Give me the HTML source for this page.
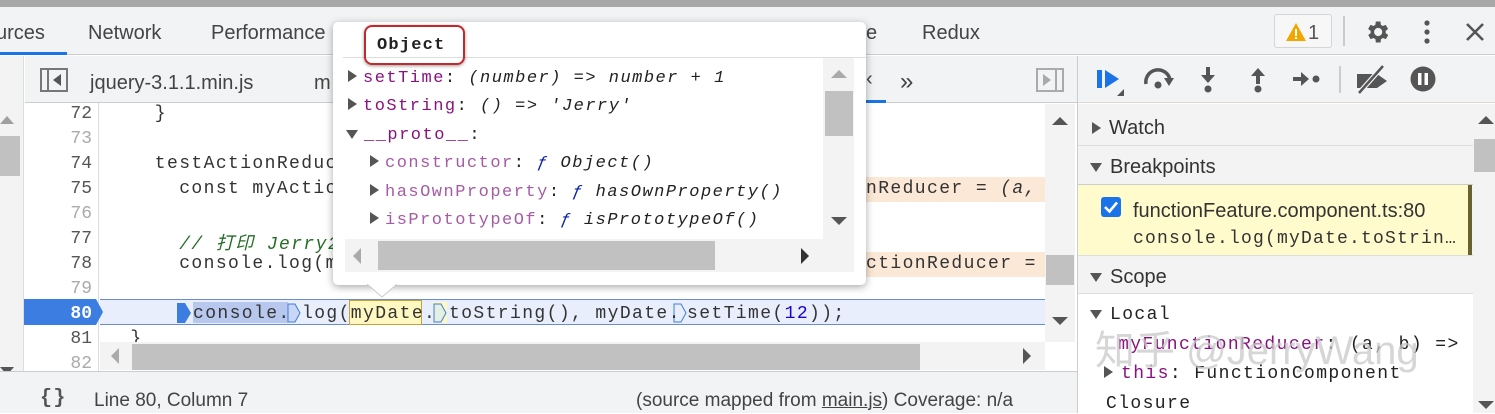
<!DOCTYPE html>
<html><head><meta charset="utf-8"><style>
*{margin:0;padding:0;box-sizing:border-box}
body{width:1495px;height:413px;overflow:hidden;background:#fff;position:relative;font-family:"Liberation Sans","Noto Sans CJK SC",sans-serif;color:#333}
.a{position:absolute}
.m{font-family:"Liberation Mono","Noto Sans CJK SC",monospace;font-size:18px;letter-spacing:1.4px;white-space:pre;margin-top:2px}
.pp{margin-top:3px}
.ui{font-size:20px;color:#444;white-space:nowrap;margin-top:2px}
.ln{position:absolute;left:24px;width:68px;text-align:right;font-family:"Liberation Mono",monospace;font-size:18px;color:#555;margin-top:2px}
.cl{position:absolute;left:106px}
.tri{display:inline-block;width:0;height:0;border-left:9px solid #555;border-top:6px solid transparent;border-bottom:6px solid transparent;margin-right:8px}
.trd{display:inline-block;width:0;height:0;border-top:9px solid #555;border-left:6px solid transparent;border-right:6px solid transparent;margin-right:8px;vertical-align:middle}
.p{color:#881280}.pl{color:#a65ba4}.i{font-style:italic}
</style></head><body>
<div class="a" style="left:0;top:0;width:1495px;height:7px;background:#a8a8a8"></div>
<div class="a" style="left:0;top:7px;width:1495px;height:48px;background:#f1f3f4;border-bottom:1px solid #cbcdd1"></div>
<div class="a ui" style="left:-4px;top:20px">urces</div>
<div class="a" style="left:0;top:52px;width:67px;height:3px;background:#1a73e8"></div>
<div class="a ui" style="left:88px;top:20px">Network</div>
<div class="a ui" style="left:211px;top:20px">Performance</div>
<div class="a ui" style="left:866px;top:20px">e</div>
<div class="a ui" style="left:922px;top:20px">Redux</div>
<div class="a" style="left:1274px;top:14px;width:58px;height:34px;border:1px solid #d5d5d5;border-radius:3px;background:#f7f7f7"></div>
<svg class="a" style="left:1285px;top:22px" width="22" height="20"><path d="M11 1 L21 19 L1 19Z" fill="#f2a600"/><rect x="10" y="7" width="2" height="7" fill="#fff"/><rect x="10" y="15" width="2" height="2" fill="#fff"/></svg>
<div class="a ui" style="left:1308px;top:20px;color:#555">1</div>
<div class="a" style="left:1343px;top:16px;width:2px;height:30px;background:#ccc"></div>
<svg class="a" style="left:1363px;top:18px" width="28" height="28" viewBox="0 0 24 24"><path fill="#555" d="M19.4 13a7.5 7.5 0 000-2l2.1-1.6-2-3.5-2.5 1a7 7 0 00-1.700-1L15 3h-4l-.4 2.9a7 7 0 00-1.7 1l-2.5-1-2 3.5L6.6 11a7.5 7.5 0 000 2l-2.1 1.6 2 3.5 2.5-1a7 7 0 001.7 1L11 21h4l.4-2.9a7 7 0 001.7-1l2.5 1 2-3.5zM13 15.5A3.5 3.5 0 1113 8.5a3.5 3.5 0 010 7z"/></svg>
<svg class="a" style="left:1420px;top:18px" width="14" height="28"><circle cx="7" cy="5" r="2.6" fill="#555"/><circle cx="7" cy="14" r="2.6" fill="#555"/><circle cx="7" cy="23" r="2.6" fill="#555"/></svg>
<svg class="a" style="left:1465px;top:22px" width="20" height="20"><path d="M2 2L18 18M18 2L2 18" stroke="#555" stroke-width="2.6"/></svg>

<div class="a" style="left:0;top:56px;width:24px;height:316px;background:#f3f3f3;border-right:1px solid #ddd"></div>
<div class="a" style="left:0;top:136px;width:20px;height:40px;background:#c1c1c1"></div>
<svg class="a" style="left:0;top:115px" width="14" height="10"><path d="M0 9L7 1L14 9Z" fill="#a0a0a0"/></svg>
<svg class="a" style="left:0;top:366px" width="14" height="10"><path d="M0 1L7 9L14 1Z" fill="#555"/></svg>

<div class="a" style="left:25px;top:56px;width:1052px;height:47px;background:#f1f3f4;border-bottom:1px solid #cbcdd1"></div>
<svg class="a" style="left:40px;top:68px" width="28" height="24"><rect x="1" y="1" width="26" height="22" fill="none" stroke="#777" stroke-width="2"/><rect x="7" y="1" width="2" height="22" fill="#777"/><path d="M21 6L13 12L21 18Z" fill="#555"/></svg>
<div class="a ui" style="left:90px;top:70px">jquery-3.1.1.min.js</div>
<div class="a ui" style="left:314px;top:70px">m</div>
<div class="a ui" style="left:866px;top:66px">‹</div>
<div class="a ui" style="left:900px;top:66px;font-size:24px">»</div>
<div class="a" style="left:866px;top:100px;width:20px;height:3px;background:#1a73e8"></div>
<svg class="a" style="left:1036px;top:68px" width="28" height="24"><rect x="1" y="1" width="26" height="22" fill="none" stroke="#aaa" stroke-width="2"/><rect x="19" y="1" width="2" height="22" fill="#aaa"/><path d="M7 6L15 12L7 18Z" fill="#aaa"/></svg>

<div class="a" style="left:98px;top:103px;width:1px;height:268px;background:#ddd"></div>
<div class="ln" style="top:102px">72</div>
<div class="ln" style="top:127px;color:#aaa">73</div>
<div class="ln" style="top:152px">74</div>
<div class="ln" style="top:177px">75</div>
<div class="ln" style="top:202px;color:#aaa">76</div>
<div class="ln" style="top:227px">77</div>
<div class="ln" style="top:252px">78</div>
<div class="ln" style="top:277px;color:#aaa">79</div>
<div class="a" style="left:100px;top:299px;width:945px;height:26px;background:#e9eefc;border-top:1px solid #6b8bd4;border-bottom:1px solid #6b8bd4"></div>
<svg class="a" style="left:24px;top:299px" width="80" height="26"><path d="M0 0H72L79 13L72 26H0Z" fill="#3b7de0"/></svg>
<div class="ln" style="top:302px;color:#fff;font-weight:bold">80</div>
<div class="ln" style="top:327px">81</div>
<div class="ln" style="top:352px;color:#aaa">82</div>

<div class="cl m" style="top:102px">    }</div>
<div class="cl m" style="top:152px">    testActionReduce</div>
<div class="cl m" style="top:177px">      const myAction</div>
<div class="cl m" style="top:227px;color:#236e25;font-style:italic">      // 打印 Jerry2</div>
<div class="cl m" style="top:252px">      console.log(my</div>
<div class="a" style="left:866px;top:177px;width:179px;height:25px;background:#fce8d6"></div>
<div class="a" style="left:866px;top:252px;width:179px;height:25px;background:#fce8d6"></div>
<div class="a m" style="left:866px;top:177px;width:179px;height:22px;overflow:hidden">nReducer = <span class="i">(a, b</span></div>
<div class="a m" style="left:866px;top:252px;width:179px;height:22px;overflow:hidden">ctionReducer = (</div>
<div class="a" style="left:193px;top:302px;width:95px;height:21px;background:#b7c7ee"></div>
<div class="a" style="left:349px;top:300px;width:73px;height:25px;background:#fff8c0;border:1px solid #c9a13a"></div>
<div class="a" style="left:433px;top:302px;width:14px;height:21px;background:#fff8c0"></div>
<svg class="a" style="left:177px;top:303px" width="14" height="20"><path d="M0 0H8L14 10L8 20H0Z" fill="#3b7de0"/></svg>
<svg class="a" style="left:287px;top:303px" width="14" height="20"><path d="M1 1H8L13 10L8 19H1Z" fill="#c9d6f5" stroke="#3b7de0"/></svg>
<svg class="a" style="left:433px;top:303px" width="14" height="20"><path d="M1 1H8L13 10L8 19H1Z" fill="#e4f0e0" stroke="#3b7de0"/></svg>
<svg class="a" style="left:673px;top:303px" width="14" height="20"><path d="M1 1H8L13 10L8 19H1Z" fill="#e9eefc" stroke="#3b7de0"/></svg>
<div class="a m" style="left:193px;top:302px">console.</div>
<div class="a m" style="left:302px;top:302px">log(myDate.</div>
<div class="a m" style="left:449px;top:302px">toString(), myDate.</div>
<div class="a m" style="left:687px;top:302px">setTime(<span style="color:#1c00cf">12</span>));</div>
<div class="cl m" style="top:327px">  }</div>

<div class="a" style="left:1045px;top:104px;width:30px;height:238px;background:#f3f3f3"></div>
<svg class="a" style="left:1052px;top:116px" width="16" height="10"><path d="M0 9L8 1L16 9Z" fill="#555"/></svg>
<svg class="a" style="left:1052px;top:316px" width="16" height="10"><path d="M0 1L8 9L16 1Z" fill="#555"/></svg>
<div class="a" style="left:1046px;top:255px;width:28px;height:30px;background:#c1c1c1"></div>
<div class="a" style="left:100px;top:342px;width:945px;height:28px;background:#f3f3f3"></div>
<div class="a" style="left:132px;top:344px;width:788px;height:26px;background:#c1c1c1"></div>
<svg class="a" style="left:110px;top:348px" width="10" height="16"><path d="M9 0L1 8L9 16Z" fill="#aaa"/></svg>
<svg class="a" style="left:1022px;top:348px" width="10" height="16"><path d="M1 0L9 8L1 16Z" fill="#555"/></svg>

<div class="a" style="left:0;top:371px;width:1077px;height:42px;background:#f1f3f4;border-top:1px solid #cbcdd1"></div>
<div class="a m" style="left:40px;top:385px;font-weight:bold;color:#555;font-size:20px">{}</div>
<div class="a ui" style="left:94px;top:388px;font-size:19px">Line 80, Column 7</div>
<div class="a ui" style="left:636px;top:388px;font-size:19px">(source mapped from <u>main.js</u>) Coverage: n/a</div>

<div class="a" style="left:1077px;top:56px;width:1px;height:357px;background:#cbcdd1"></div>
<div class="a" style="left:1078px;top:56px;width:417px;height:47px;background:#f1f3f4;border-bottom:1px solid #e0d8d0"></div>
<svg class="a" style="left:1096px;top:67px" width="34" height="30"><rect x="1" y="3" width="5" height="18" fill="#1a73e8"/><path d="M9 3L23 12L9 21Z" fill="#1a73e8"/><path d="M28 22V29H21Z" fill="#555"/></svg>
<svg class="a" style="left:1143px;top:68px" width="32" height="22"><path d="M3 16A12 12 0 0127 12" fill="none" stroke="#555" stroke-width="3.5"/><path d="M21 10L31 10L26 18Z" fill="#555"/><circle cx="15" cy="17" r="3.5" fill="#555"/></svg>
<svg class="a" style="left:1198px;top:66px" width="20" height="28"><rect x="8" y="1" width="4" height="10" fill="#555"/><path d="M3 9H17L10 17Z" fill="#555"/><circle cx="10" cy="23" r="3.5" fill="#555"/></svg>
<svg class="a" style="left:1248px;top:66px" width="20" height="28"><path d="M3 10H17L10 2Z" fill="#555"/><rect x="8" y="9" width="4" height="9" fill="#555"/><circle cx="10" cy="23" r="3.5" fill="#555"/></svg>
<svg class="a" style="left:1292px;top:70px" width="30" height="18"><rect x="1" y="7" width="10" height="4" fill="#555"/><path d="M9 2L17 9L9 16Z" fill="#555"/><circle cx="24" cy="9" r="3.5" fill="#555"/></svg>
<div class="a" style="left:1339px;top:66px;width:2px;height:27px;background:#ccc"></div>
<svg class="a" style="left:1355px;top:64px" width="34" height="30"><path d="M2 10H22L32 17L22 24H2Z" fill="#555"/><path d="M4 29L28 2" stroke="#f1f3f4" stroke-width="5"/><path d="M4 29L28 2" stroke="#555" stroke-width="2.5"/></svg>
<svg class="a" style="left:1410px;top:66px" width="26" height="26"><circle cx="13" cy="13" r="12.5" fill="#555"/><rect x="8" y="7" width="3.5" height="12" fill="#fff"/><rect x="14.5" y="7" width="3.5" height="12" fill="#fff"/></svg>

<div class="a" style="left:1078px;top:104px;width:395px;height:309px;background:#f3f3f3"></div>
<div class="a ui" style="left:1092px;top:115px;color:#333"><span class="tri"></span>Watch</div>
<div class="a" style="left:1078px;top:145px;width:395px;height:1px;background:#ddd"></div>
<div class="a ui" style="left:1090px;top:154px;color:#333"><span class="trd"></span>Breakpoints</div>
<div class="a" style="left:1078px;top:184px;width:395px;height:1px;background:#ccc"></div>
<div class="a" style="left:1078px;top:185px;width:394px;height:70px;background:#fffbcc;border-right:4px solid #6a6130"></div>
<svg class="a" style="left:1101px;top:197px" width="20" height="20"><rect width="20" height="20" rx="3" fill="#1a73e8"/><path d="M4 10L8.5 14.5L16 5.5" fill="none" stroke="#fff" stroke-width="2.6"/></svg>
<div class="a ui" style="left:1133px;top:198px;color:#333">functionFeature.component.ts:80</div>
<div class="a m" style="left:1133px;top:227px;color:#333;letter-spacing:1.2px">console.log(myDate.toStrin…</div>
<div class="a" style="left:1078px;top:255px;width:395px;height:1px;background:#ddd"></div>
<div class="a ui" style="left:1090px;top:264px;color:#333"><span class="trd"></span>Scope</div>
<div class="a" style="left:1078px;top:293px;width:395px;height:120px;background:#fff;border-top:1px solid #ddd"></div>
<div class="a m" style="left:1090px;top:303px;color:#222"><span class="trd"></span>Local</div>
<div class="a m" style="left:1118px;top:333px;color:#222"><span class="p">myFunctionReducer</span>: (a, b) => a…</div>
<div class="a m" style="left:1104px;top:362px;color:#222"><span class="tri"></span><span class="p">this</span>: FunctionComponent</div>
<div class="a m" style="left:1106px;top:392px;color:#222">Closure</div>
<div class="a" style="left:1095px;top:318px;font-size:40px;color:rgba(200,200,200,.75);white-space:nowrap">知乎 @JerryWang</div>
<div class="a" style="left:1473px;top:104px;width:22px;height:309px;background:#f3f3f3"></div>
<div class="a" style="left:1474px;top:139px;width:21px;height:33px;background:#c1c1c1"></div>
<svg class="a" style="left:1478px;top:115px" width="16" height="10"><path d="M0 9L8 1L16 9Z" fill="#555"/></svg>
<svg class="a" style="left:1478px;top:400px" width="16" height="10"><path d="M0 1L8 9L16 1Z" fill="#555"/></svg>

<div class="a" style="left:333px;top:22px;width:533px;height:263px;background:#fff;border-radius:5px;box-shadow:0 2px 8px rgba(0,0,0,.35)"></div>
<svg class="a" style="left:367px;top:284px" width="30" height="14"><path d="M0 0L15 13L30 0Z" fill="#fff"/><path d="M0 0L15 13L30 0" fill="none" stroke="#ccc"/></svg>
<div class="a" style="left:343px;top:57px;width:523px;height:1px;background:#ddd"></div>
<div class="a" style="left:364px;top:25px;width:101px;height:40px;border:2px solid #c3282e;border-radius:8px;box-shadow:0 1px 3px rgba(0,0,0,.4)"></div>
<div class="a m" style="left:377px;top:34px;font-weight:bold;color:#222;font-size:17px;letter-spacing:1.2px">Object</div>
<div class="a m pp" style="left:348px;top:66px;font-size:17px;letter-spacing:1.5px;color:#222"><span class="tri" style="margin-right:6px"></span><span class="p">setTime</span>: <span class="i">(number) =&gt; number + 1</span></div>
<div class="a m pp" style="left:348px;top:94px;font-size:17px;letter-spacing:1.5px;color:#222"><span class="tri" style="margin-right:6px"></span><span class="p">toString</span>: <span class="i">() =&gt; 'Jerry'</span></div>
<div class="a m pp" style="left:346px;top:123px;font-size:17px;letter-spacing:1.5px;color:#222"><span class="trd" style="margin-right:6px"></span><span class="p">__proto__</span>:</div>
<div class="a m pp" style="left:370px;top:151px;font-size:17px;letter-spacing:1.5px;color:#222"><span class="tri" style="margin-right:6px"></span><span class="pl">constructor</span>: <span class="i"><span style="color:#0d22aa">ƒ</span> Object()</span></div>
<div class="a m pp" style="left:370px;top:180px;font-size:17px;letter-spacing:1.5px;color:#222"><span class="tri" style="margin-right:6px"></span><span class="pl">hasOwnProperty</span>: <span class="i"><span style="color:#0d22aa">ƒ</span> hasOwnProperty()</span></div>
<div class="a m pp" style="left:370px;top:208px;font-size:17px;letter-spacing:1.5px;color:#222"><span class="tri" style="margin-right:6px"></span><span class="pl">isPrototypeOf</span>: <span class="i"><span style="color:#0d22aa">ƒ</span> isPrototypeOf()</span></div>
<div class="a" style="left:823px;top:58px;width:31px;height:181px;background:#f3f3f3"></div>
<div class="a" style="left:825px;top:91px;width:28px;height:45px;background:#c1c1c1"></div>
<svg class="a" style="left:831px;top:69px" width="16" height="10"><path d="M0 9L8 1L16 9Z" fill="#aaa"/></svg>
<svg class="a" style="left:831px;top:216px" width="16" height="10"><path d="M0 1L8 9L16 1Z" fill="#555"/></svg>
<div class="a" style="left:345px;top:239px;width:509px;height:33px;background:#f3f3f3"></div>
<div class="a" style="left:378px;top:241px;width:337px;height:29px;background:#c1c1c1"></div>
<svg class="a" style="left:352px;top:248px" width="10" height="16"><path d="M9 0L1 8L9 16Z" fill="#aaa"/></svg>
<svg class="a" style="left:800px;top:248px" width="10" height="16"><path d="M1 0L9 8L1 16Z" fill="#333"/></svg>
</body></html>
